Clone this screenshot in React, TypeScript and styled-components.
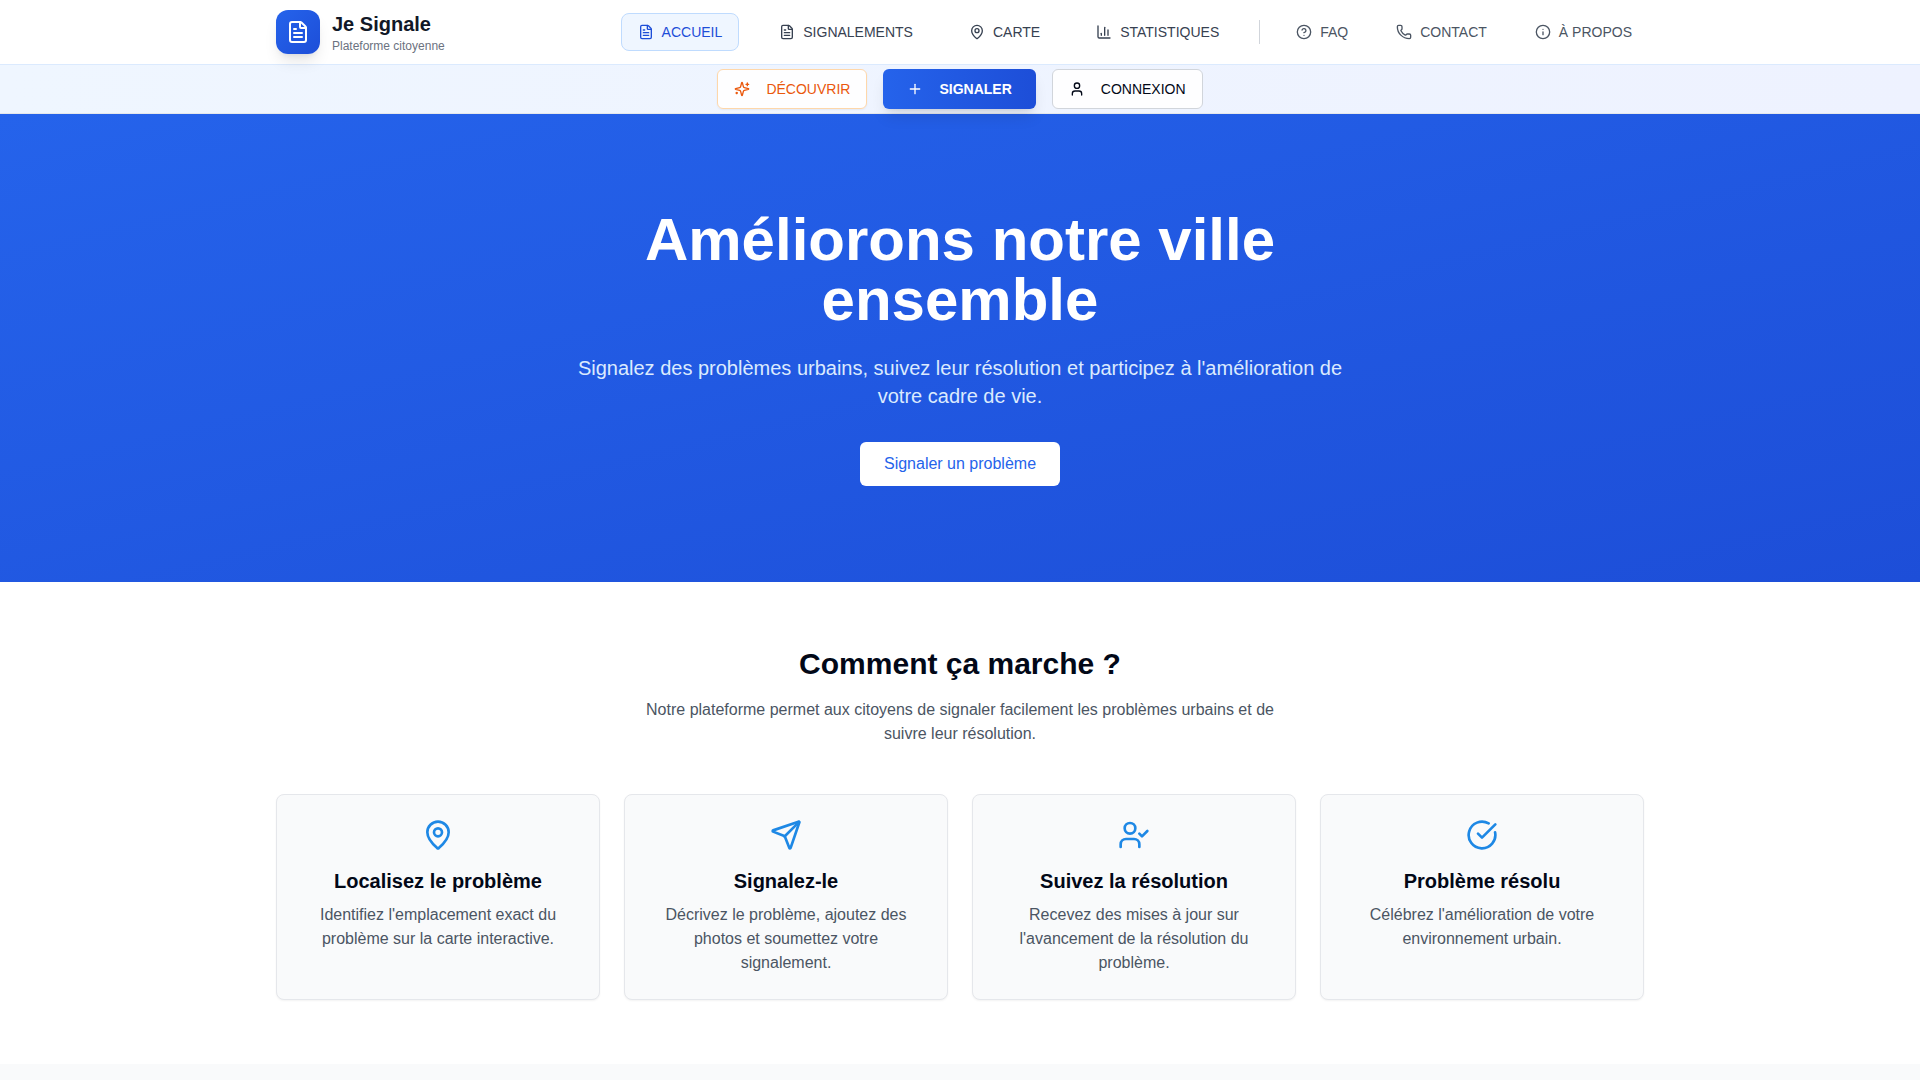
import React from "react";
import styled, { createGlobalStyle, css } from "styled-components";
import {
  ChartColumn,
  CircleCheckBig,
  CircleHelp,
  FileText,
  Info,
  MapPin,
  Phone,
  Plus,
  Send,
  User,
  UserCheck,
} from "lucide-react";

const GlobalStyle = createGlobalStyle`
  *, *::before, *::after { box-sizing: border-box; }
  body {
    margin: 0;
    background: #ffffff;
    color: #020817;
    font-family: "Liberation Sans", Arial, sans-serif;
    font-size: 16px;
    line-height: 24px;
  }
  h1, h2, h3, p { margin: 0; }
  a { color: inherit; text-decoration: none; }
  button { font: inherit; cursor: pointer; }
  svg { display: block; flex-shrink: 0; }
`;

const Container = styled.div`
  width: 100%;
  max-width: 1400px;
  margin: 0 auto;
  padding: 0 16px;
`;

const Header = styled.header`
  position: sticky;
  top: 0;
  z-index: 10;
  background: #ffffff;
  border-bottom: 1px solid #e5e7eb;
`;

const TopBar = styled(Container)`
  display: flex;
  align-items: center;
  justify-content: space-between;
  height: 64px;
`;

const Brand = styled.a`
  display: flex;
  align-items: center;
  gap: 12px;
`;

const BrandMark = styled.span`
  display: grid;
  place-items: center;
  width: 44px;
  height: 44px;
  border-radius: 12px;
  color: #ffffff;
  background: linear-gradient(to bottom right, #2563eb, #1d4ed8);
  box-shadow: 0 10px 15px -3px rgba(0, 0, 0, 0.1), 0 4px 6px -4px rgba(0, 0, 0, 0.1);
`;

const BrandText = styled.span`
  display: flex;
  flex-direction: column;
`;

const BrandName = styled.span`
  font-size: 20px;
  line-height: 28px;
  font-weight: 700;
  color: #111827;
`;

const BrandTagline = styled.span`
  font-size: 12px;
  line-height: 16px;
  color: #6b7280;
`;

const Nav = styled.nav`
  display: flex;
  align-items: center;
  gap: 24px;
`;

const NavLink = styled.a<{ $active?: boolean; $secondary?: boolean }>`
  display: flex;
  align-items: center;
  gap: 8px;
  padding: 8px ${(p) => (p.$secondary ? 12 : 16)}px;
  border-radius: 8px;
  font-size: 14px;
  line-height: 20px;
  text-transform: uppercase;
  white-space: nowrap;
  color: ${(p) => (p.$secondary ? "#4b5563" : "#374151")};
  ${(p) =>
    p.$active &&
    css`
      color: #1d4ed8;
      background: #eff6ff;
      border: 1px solid #bfdbfe;
    `}
`;

const Separator = styled.span`
  width: 1px;
  height: 24px;
  background: #d1d5db;
`;

const ActionBar = styled.div`
  display: flex;
  align-items: center;
  justify-content: center;
  gap: 16px;
  height: 49px;
  border-top: 1px solid #dbeafe;
  background: linear-gradient(to right, #eff6ff, #eef2ff);
`;

const actionTones = {
  outline: css`
    padding: 0 16px;
    color: #020817;
    background: rgba(255, 255, 255, 0.9);
    border: 1px solid #d1d5db;
  `,
  accent: css`
    padding: 0 16px;
    color: #ea580c;
    background: rgba(255, 255, 255, 0.9);
    border: 1px solid #fed7aa;
    box-shadow: 0 1px 2px rgba(0, 0, 0, 0.05);
  `,
  primary: css`
    padding: 0 24px;
    color: #ffffff;
    font-weight: 700;
    background: linear-gradient(to right, #2563eb, #1d4ed8);
    border: 0;
    box-shadow: 0 10px 15px -3px rgba(0, 0, 0, 0.1), 0 4px 6px -4px rgba(0, 0, 0, 0.1);
  `,
};

const ActionButton = styled.button<{ $tone: keyof typeof actionTones }>`
  && {
    display: inline-flex;
    align-items: center;
    gap: 16px;
    height: 40px;
    border-radius: 6px;
    font-size: 14px;
    line-height: 20px;
    text-transform: uppercase;
    ${(p) => actionTones[p.$tone]}
  }
`;

const Hero = styled.section`
  padding: 96px 16px;
  text-align: center;
  color: #ffffff;
  background: linear-gradient(to bottom right, #2563eb, #1d4ed8);
`;

const HeroInner = styled.div`
  max-width: 768px;
  margin: 0 auto;
`;

const HeroTitle = styled.h1`
  font-size: 60px;
  line-height: 60px;
  font-weight: 700;
`;

const HeroText = styled.p`
  margin: 24px 0 32px;
  font-size: 20px;
  line-height: 28px;
  color: #dbeafe;
`;

const HeroButton = styled.button`
  display: inline-flex;
  align-items: center;
  height: 44px;
  padding: 0 24px;
  border: 0;
  border-radius: 6px;
  color: #2563eb;
  background: #ffffff;
  vertical-align: top;
`;

const Steps = styled.section`
  padding: 64px 0;
`;

const StepsHeading = styled.div`
  max-width: 672px;
  margin: 0 auto 48px;
  text-align: center;
`;

const StepsTitle = styled.h2`
  margin-bottom: 16px;
  font-size: 30px;
  line-height: 36px;
  font-weight: 700;
`;

const Muted = styled.p`
  color: #4b5563;
`;

const StepGrid = styled.div`
  display: grid;
  grid-template-columns: repeat(4, minmax(0, 1fr));
  gap: 24px;
`;

const StepCard = styled.article`
  display: flex;
  flex-direction: column;
  align-items: center;
  padding: 24px;
  text-align: center;
  background: #f9fafb;
  border: 1px solid #e5e7eb;
  border-radius: 8px;
  box-shadow: 0 1px 2px rgba(0, 0, 0, 0.05);

  > svg { color: #1e88e5; }
`;

const StepTitle = styled.h3`
  margin: 16px 0 8px;
  font-size: 20px;
  line-height: 28px;
  font-weight: 700;
`;

const NextSection = styled.section`
  min-height: 64px;
  background: #f9fafb;
`;

const SparklesIcon = ({ size = 24 }: { size?: number }) => (
  <svg
    width={size}
    height={size}
    viewBox="0 0 24 24"
    fill="none"
    stroke="currentColor"
    strokeWidth="2"
    strokeLinecap="round"
    strokeLinejoin="round"
    aria-hidden="true"
  >
    <path d="M9.937 15.5A2 2 0 0 0 8.5 14.063l-6.135-1.582a.5.5 0 0 1 0-.962L8.5 9.936A2 2 0 0 0 9.937 8.5l1.582-6.135a.5.5 0 0 1 .963 0L14.063 8.5A2 2 0 0 0 15.5 9.937l6.135 1.581a.5.5 0 0 1 0 .964L15.5 14.063a2 2 0 0 0-1.437 1.437l-1.582 6.135a.5.5 0 0 1-.963 0z" />
    <path d="M20 3v4" />
    <path d="M22 5h-4" />
    <path d="M4 17v2" />
    <path d="M5 18H3" />
  </svg>
);

const mainLinks = [
  { label: "Accueil", Icon: FileText, active: true },
  { label: "Signalements", Icon: FileText },
  { label: "Carte", Icon: MapPin },
  { label: "Statistiques", Icon: ChartColumn },
];

const infoLinks = [
  { label: "FAQ", Icon: CircleHelp },
  { label: "Contact", Icon: Phone },
  { label: "À propos", Icon: Info },
];

const steps = [
  {
    title: "Localisez le problème",
    text: "Identifiez l'emplacement exact du problème sur la carte interactive.",
    Icon: MapPin,
  },
  {
    title: "Signalez-le",
    text: "Décrivez le problème, ajoutez des photos et soumettez votre signalement.",
    Icon: Send,
  },
  {
    title: "Suivez la résolution",
    text: "Recevez des mises à jour sur l'avancement de la résolution du problème.",
    Icon: UserCheck,
  },
  {
    title: "Problème résolu",
    text: "Célébrez l'amélioration de votre environnement urbain.",
    Icon: CircleCheckBig,
  },
];

export default function App() {
  return (
    <>
      <GlobalStyle />
      <Header>
        <TopBar>
          <Brand href="#">
            <BrandMark>
              <FileText size={24} />
            </BrandMark>
            <BrandText>
              <BrandName>Je Signale</BrandName>
              <BrandTagline>Plateforme citoyenne</BrandTagline>
            </BrandText>
          </Brand>
          <Nav>
            {mainLinks.map(({ label, Icon, active }) => (
              <NavLink key={label} href="#" $active={active}>
                <Icon size={16} />
                {label}
              </NavLink>
            ))}
            <Separator />
            {infoLinks.map(({ label, Icon }) => (
              <NavLink key={label} href="#" $secondary>
                <Icon size={16} />
                {label}
              </NavLink>
            ))}
          </Nav>
        </TopBar>
        <ActionBar>
          <ActionButton type="button" $tone="accent">
            <SparklesIcon size={16} />
            Découvrir
          </ActionButton>
          <ActionButton type="button" $tone="primary">
            <Plus size={16} />
            Signaler
          </ActionButton>
          <ActionButton type="button" $tone="outline">
            <User size={16} />
            Connexion
          </ActionButton>
        </ActionBar>
      </Header>
      <main>
        <Hero>
          <HeroInner>
            <HeroTitle>Améliorons notre ville ensemble</HeroTitle>
            <HeroText>
              Signalez des problèmes urbains, suivez leur résolution et participez à l'amélioration de
              votre cadre de vie.
            </HeroText>
            <HeroButton type="button">Signaler un problème</HeroButton>
          </HeroInner>
        </Hero>
        <Steps>
          <Container>
            <StepsHeading>
              <StepsTitle>Comment ça marche ?</StepsTitle>
              <Muted>
                Notre plateforme permet aux citoyens de signaler facilement les problèmes urbains et de
                suivre leur résolution.
              </Muted>
            </StepsHeading>
            <StepGrid>
              {steps.map(({ title, text, Icon }) => (
                <StepCard key={title}>
                  <Icon size={32} />
                  <StepTitle>{title}</StepTitle>
                  <Muted>{text}</Muted>
                </StepCard>
              ))}
            </StepGrid>
          </Container>
        </Steps>
        <NextSection />
      </main>
    </>
  );
}
